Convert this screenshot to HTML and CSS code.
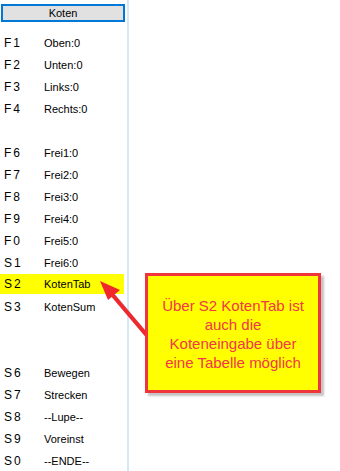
FILE: index.html
```html
<!DOCTYPE html>
<html lang="de">
  <head>
    <meta charset="UTF-8" />
    <title>Koten</title>
    <link rel="stylesheet" href="styles.css">
  </head>
  <body>
    <div class="panel">
      <div class="panel__head">
        <button class="panel__button">Koten</button>
      </div>
      <ul class="keys">
        <li class="keys__row"><span class="keys__key">F1</span><span class="keys__label">Oben:0</span></li>
        <li class="keys__row"><span class="keys__key">F2</span><span class="keys__label">Unten:0</span></li>
        <li class="keys__row"><span class="keys__key">F3</span><span class="keys__label">Links:0</span></li>
        <li class="keys__row"><span class="keys__key">F4</span><span class="keys__label">Rechts:0</span></li>
        <li class="keys__row"></li>
        <li class="keys__row"><span class="keys__key">F6</span><span class="keys__label">Frei1:0</span></li>
        <li class="keys__row"><span class="keys__key">F7</span><span class="keys__label">Frei2:0</span></li>
        <li class="keys__row"><span class="keys__key">F8</span><span class="keys__label">Frei3:0</span></li>
        <li class="keys__row"><span class="keys__key">F9</span><span class="keys__label">Frei4:0</span></li>
        <li class="keys__row"><span class="keys__key">F0</span><span class="keys__label">Frei5:0</span></li>
        <li class="keys__row"><span class="keys__key">S1</span><span class="keys__label">Frei6:0</span></li>
        <li class="keys__row keys__row--active"><span class="keys__key">S2</span><span class="keys__label">KotenTab</span></li>
        <li class="keys__row"><span class="keys__key">S3</span><span class="keys__label">KotenSum</span></li>
        <li class="keys__row"></li>
        <li class="keys__row"></li>
        <li class="keys__row"><span class="keys__key">S6</span><span class="keys__label">Bewegen</span></li>
        <li class="keys__row"><span class="keys__key">S7</span><span class="keys__label">Strecken</span></li>
        <li class="keys__row"><span class="keys__key">S8</span><span class="keys__label">--Lupe--</span></li>
        <li class="keys__row"><span class="keys__key">S9</span><span class="keys__label">Voreinst</span></li>
        <li class="keys__row"><span class="keys__key">S0</span><span class="keys__label">--ENDE--</span></li>
      </ul>
    </div>

    <!-- annotation on top of the screenshot -->
    <svg class="arrow" width="70" height="70" viewBox="0 0 70 70">
      <line x1="55" y1="60" x2="18" y2="16" stroke="#bbbbbb" stroke-width="4" transform="translate(2,2)" />
      <line x1="55" y1="60" x2="16" y2="14" stroke="#f0272d" stroke-width="4" />
      <polygon points="6,3 26,12 14,22" fill="#f0272d" />
    </svg>
    <div class="callout">
      Über S2 KotenTab ist<br>auch die<br>Koteneingabe über<br>eine Tabelle möglich
    </div>
  </body>
</html>
```

FILE: styles.css
```css
* {
  margin: 0;
  padding: 0;
  box-sizing: border-box;
}

body {
  width: 340px;
  height: 471px;
  background: #ffffff;
  font-family: "Liberation Sans", Arial, sans-serif;
  position: relative;
  overflow: hidden;
}

.panel {
  width: 129px;
  height: 471px;
  border-right: 2px solid #d4e8f9;
}

.panel__head {
  padding: 4px 2px 0 1px;
  height: 32px;
}

.panel__button {
  display: block;
  width: 124px;
  height: 18px;
  background: #e1e1e1;
  border: 2px solid #0078d7;
  font-family: inherit;
  font-size: 11px;
  color: #000;
  line-height: 14px;
}

.keys {
  list-style: none;
}

.keys__row {
  display: flex;
  align-items: center;
  height: 22px;
  width: 124px;
}

.keys__row--active {
  background: #ffff00;
  height: 20px;
  margin-bottom: 2px;
}

.keys__key {
  width: 44px;
  padding-left: 4px;
  font-size: 12px;
  letter-spacing: 2px;
  color: #000;
}

.keys__label {
  font-size: 11px;
  color: #000;
}

.arrow {
  position: absolute;
  left: 94px;
  top: 278px;
}

.callout {
  position: absolute;
  left: 145px;
  top: 273px;
  width: 176px;
  height: 120px;
  padding: 20px 4px 0;
  background: #ffff00;
  border: 3px solid #f0343c;
  box-shadow: 3px 3px 2px #c4c4c4;
  color: #f0384a;
  font-size: 15px;
  line-height: 19px;
  text-align: center;
}
```
